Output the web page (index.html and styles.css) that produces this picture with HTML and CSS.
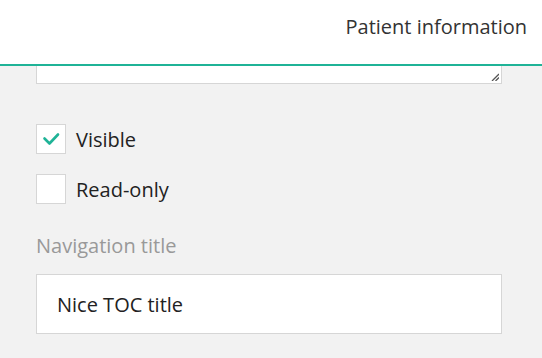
FILE: index.html
```html
<!DOCTYPE html>
<html lang="en">
<head>
    <meta charset="UTF-8">
    <meta name="viewport" content="width=device-width, initial-scale=1.0">
    <title>Patient information</title>
    <link rel="stylesheet" href="styles.css">
</head>
<body>
    <div class="header">
        <span class="header-title">Patient information</span>
    </div>

    <div class="form">
        <div class="textarea-tail">
            <svg class="resize" width="8" height="8" viewBox="0 0 8 8">
                <path d="M1 8 L8 1 M4.5 8 L8 4.5" stroke="#555" stroke-width="1.3" fill="none"/>
            </svg>
        </div>

        <div class="checks">
            <label class="check-row">
                <span class="checkbox">
                    <svg width="20" height="16" viewBox="0 0 20 16">
                        <path d="M3.5 7.5 L8.5 12.5 L17 3.5" stroke="#1fb397" stroke-width="2.6" fill="none" stroke-linecap="round" stroke-linejoin="round"/>
                    </svg>
                </span>
                <span class="check-label">Visible</span>
            </label>
            <label class="check-row">
                <span class="checkbox"></span>
                <span class="check-label">Read-only</span>
            </label>
        </div>

        <div class="field-label">Navigation title</div>
        <div class="text-input">Nice TOC title</div>
    </div>
</body>
</html>
```

FILE: styles.css
```css
body {
    margin: 0;
    background: #f2f2f2;
    font-family: "Open Sans", sans-serif;
    color: #222;
}
.header {
    height: 64px;
    background: white;
    border-bottom: 2px solid #1fb397;
    display: flex;
    align-items: center;
    justify-content: flex-end;
    padding-right: 15px;
}
.header-title {
    font-size: 20px;
    color: #333;
    margin-top: -12px;
}
.form {
    padding: 0 40px 0 36px;
}
.textarea-tail {
    height: 17px;
    background: white;
    border: 1px solid #d6d6d6;
    border-top: none;
    position: relative;
}
.resize {
    position: absolute;
    right: 2px;
    bottom: 2px;
}
.checks {
    margin-top: 40px;
    display: flex;
    flex-direction: column;
    gap: 20px;
}
.check-row {
    display: flex;
    align-items: center;
    gap: 10px;
}
.checkbox {
    width: 28px;
    height: 28px;
    background: white;
    border: 1px solid #d6d6d6;
    display: flex;
    align-items: center;
    justify-content: center;
}
.check-label {
    font-size: 20px;
    color: #222;
}
.field-label {
    margin-top: 30px;
    font-size: 20px;
    line-height: 24px;
    color: #999;
}
.text-input {
    margin-top: 16px;
    height: 58px;
    background: white;
    border: 1px solid #d6d6d6;
    padding-left: 20px;
    display: flex;
    align-items: center;
    font-size: 20px;
    color: #222;
}
```
